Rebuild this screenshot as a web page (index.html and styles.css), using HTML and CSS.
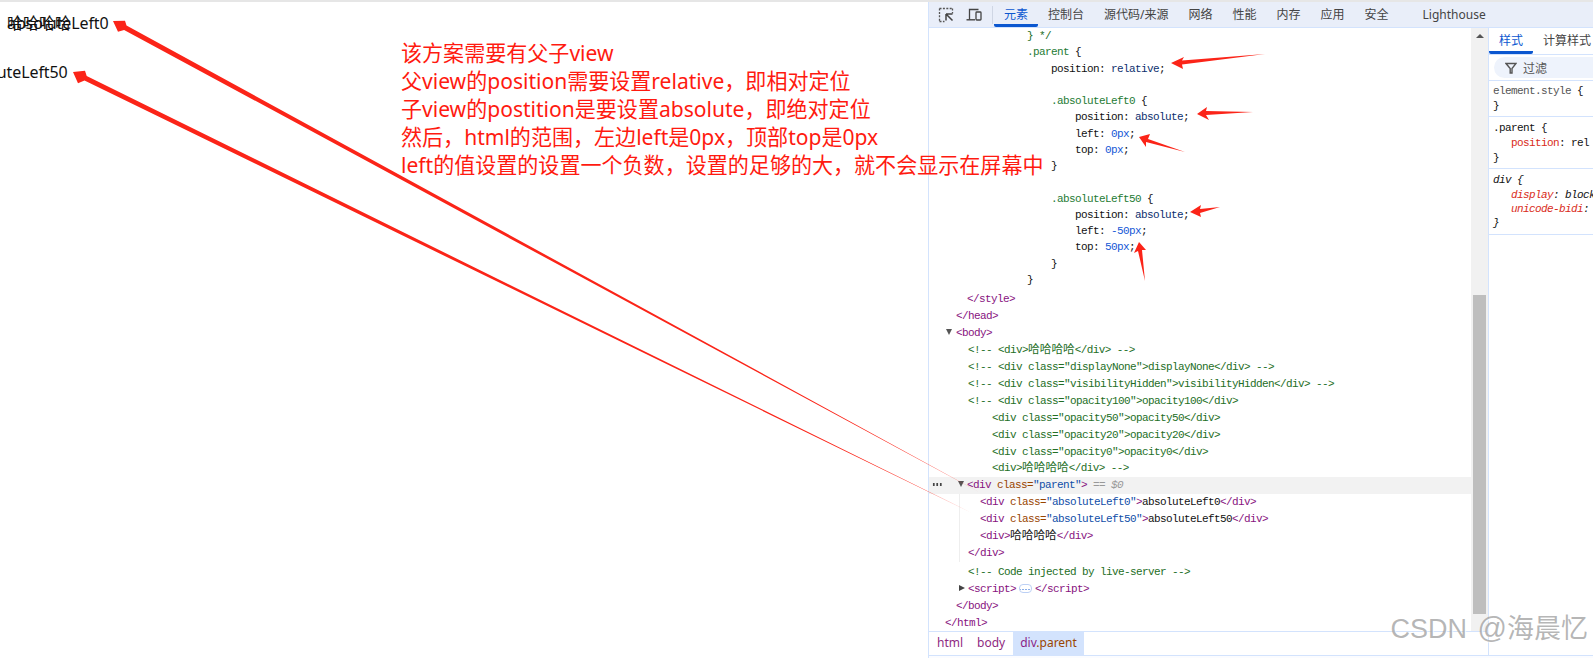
FILE: index.html
```html
<!DOCTYPE html>
<html lang="zh">
<head>
<meta charset="utf-8">
<title>absolute</title>
<link rel="stylesheet" href="styles.css">
</head>
<body>
<main class="preview">
  <div class="parent">
    <div class="abs abs-0">absoluteLeft0</div>
    <div class="abs abs-50">absoluteLeft50</div>
    <div class="plain">哈哈哈哈</div>
  </div>
</main>
<section class="devtools">
  <nav class="toolbar">
    <svg class="tool-icon" width="16" height="16" viewBox="0 0 16 16"><path d="M1.500 1.500h13M1.500 1.500v13M1.500 14.500h5M14.500 1.500v5" fill="none" stroke="#555" stroke-width="1.300" stroke-dasharray="2 1.400"/><path d="M8 7h6.500M8 7v6.500M8.500 7.500l6 6" fill="none" stroke="#444" stroke-width="1.500"/></svg>
    <svg class="tool-icon device" width="16" height="16" viewBox="0 0 16 16"><path d="M3.500 12.500V2.500h9" fill="none" stroke="#444" stroke-width="1.300"/><path d="M0.500 12.800h8.500" fill="none" stroke="#444" stroke-width="1.400"/><rect x="10" y="5" width="5" height="8" rx="0.800" fill="none" stroke="#444" stroke-width="1.300"/></svg>
    <span class="tool-sep"></span>
    <span class="tab active">元素</span>
    <span class="tab">控制台</span>
    <span class="tab">源代码/来源</span>
    <span class="tab">网络</span>
    <span class="tab">性能</span>
    <span class="tab">内存</span>
    <span class="tab">应用</span>
    <span class="tab">安全</span>
    <span class="tab lighthouse">Lighthouse</span>
  </nav>
  <div class="panes">
    <div class="elements">
      <div class="elements-main">
        <div class="tree">
          <div class="css-block">
            <div class="line p98 c">} */</div>
            <div class="line p98"><span class="sel">.parent</span> {</div>
            <div class="line p122">position: <span class="val">relative</span>;</div>
            <div class="line"></div>
            <div class="line p122"><span class="sel">.absoluteLeft0</span> {</div>
            <div class="line p146">position: <span class="val">absolute</span>;</div>
            <div class="line p146">left: <span class="num">0px</span>;</div>
            <div class="line p146">top: <span class="num">0px</span>;</div>
            <div class="line p122">}</div>
            <div class="line"></div>
            <div class="line p122"><span class="sel">.absoluteLeft50</span> {</div>
            <div class="line p146">position: <span class="val">absolute</span>;</div>
            <div class="line p146">left: <span class="num">-50px</span>;</div>
            <div class="line p146">top: <span class="num">50px</span>;</div>
            <div class="line p122">}</div>
            <div class="line p98">}</div>
          </div>
          <div class="row p38 t">&lt;/style&gt;</div>
          <div class="row p27 t">&lt;/head&gt;</div>
          <div class="row p17 t"><span class="tri-down"></span>&lt;body&gt;</div>
          <div class="row p39 c">&lt;!-- &lt;div&gt;<span class="cjk">哈哈哈哈</span>&lt;/div&gt; --&gt;</div>
          <div class="row p39 c">&lt;!-- &lt;div class="displayNone"&gt;displayNone&lt;/div&gt; --&gt;</div>
          <div class="row p39 c">&lt;!-- &lt;div class="visibilityHidden"&gt;visibilityHidden&lt;/div&gt; --&gt;</div>
          <div class="row p39 c">&lt;!-- &lt;div class="opacity100"&gt;opacity100&lt;/div&gt;</div>
          <div class="row p63 c">&lt;div class="opacity50"&gt;opacity50&lt;/div&gt;</div>
          <div class="row p63 c">&lt;div class="opacity20"&gt;opacity20&lt;/div&gt;</div>
          <div class="row p63 c">&lt;div class="opacity0"&gt;opacity0&lt;/div&gt;</div>
          <div class="row p63 c pull-up">&lt;div&gt;<span class="cjk">哈哈哈哈</span>&lt;/div&gt; --&gt;</div>
          <div class="row selected"><span class="dots"></span><span class="tri-down tight"></span><span class="t">&lt;div </span><span class="a">class=</span><span class="v">"parent"</span><span class="t">&gt;</span> <span class="eq">== <i>$0</i></span></div>
          <div class="children">
            <div class="row p20 t">&lt;div <span class="a">class=</span><span class="v">"absoluteLeft0"</span>&gt;<span class="txt">absoluteLeft0</span>&lt;/div&gt;</div>
            <div class="row p20 t">&lt;div <span class="a">class=</span><span class="v">"absoluteLeft50"</span>&gt;<span class="txt">absoluteLeft50</span>&lt;/div&gt;</div>
            <div class="row p20 t">&lt;div&gt;<span class="cjk txt">哈哈哈哈</span>&lt;/div&gt;</div>
            <div class="row p8 t">&lt;/div&gt;</div>
          </div>
          <div class="row p39 c push-down">&lt;!-- Code injected by live-server --&gt;</div>
          <div class="row p30 t"><span class="tri-right"></span>&lt;script&gt;<span class="pill"></span>&lt;/script&gt;</div>
          <div class="row p27 t">&lt;/body&gt;</div>
          <div class="row p16 t">&lt;/html&gt;</div>
        </div>
        <div class="scrollbar">
          <span class="arrow-up"></span>
          <span class="thumb"></span>
        </div>
      </div>
      <div class="crumbs">
        <span class="crumb">html</span>
        <span class="crumb">body</span>
        <span class="crumb current">div<span class="cls">.parent</span></span>
      </div>
    </div>
    <aside class="sidebar">
      <div class="side-tabs">
        <span class="side-tab active">样式</span>
        <span class="side-tab">计算样式</span>
      </div>
      <div class="filter-bar">
        <div class="filter">
          <svg width="12" height="12" viewBox="0 0 12 12"><path d="M1 1.500h10L7 6.500V11H5.200V6.500z" fill="none" stroke="#555" stroke-width="1.400"/></svg>
          <span>过滤</span>
        </div>
      </div>
      <div class="rule">
        <div class="rl muted">element.style <span class="ink">{</span></div>
        <div class="rl">}</div>
      </div>
      <div class="rule">
        <div class="rl">.parent {</div>
        <div class="rl in"><span class="prop">position</span>: rel</div>
        <div class="rl">}</div>
      </div>
      <div class="rule ua">
        <div class="rl">div {</div>
        <div class="rl in"><span class="prop">display</span>: block</div>
        <div class="rl in"><span class="prop">unicode-bidi</span>: i</div>
        <div class="rl">}</div>
      </div>
    </aside>
  </div>
  <div class="status"></div>
</section>

<div class="note">
  <div>该方案需要有父子view</div>
  <div>父view的position需要设置relative，即相对定位</div>
  <div>子view的postition是要设置absolute，即绝对定位</div>
  <div>然后，html的范围，左边left是0px，顶部top是0px</div>
  <div>left的值设置的设置一个负数，设置的足够的大，就不会显示在屏幕中</div>
</div>

<svg class="arrows" width="1593" height="658" viewBox="0 0 1593 658">
  <polygon points="113,21 125,20.700 126.500,25.500 979,492 124.100,29.900 118,31.700"/>
  <polygon points="73,72 85,70.700 86.700,76 972,513 84.500,80.400 78,83.300"/>
  <polygon points="1171,63 1184,57 1182,60.500 1265,54 1182,64.500 1183,69"/>
  <polygon points="1197,114 1207,107 1206,111 1253,112 1206,115 1209,120"/>
  <polygon points="1139,137 1150,134 1148,139 1185,152 1146,142 1146,147"/>
  <polygon points="1190,212 1201,205 1200,209 1220,207 1200,213 1201,217"/>
  <polygon points="1139,242 1134,253 1138,251 1145,281 1142,250 1146,250"/>
</svg>

<div class="watermark">CSDN <span class="at">@</span>海晨忆</div>
</body>
</html>
```

FILE: styles.css
```css
* { box-sizing: border-box; }
html, body { margin: 0; padding: 0; }
body {
  width: 1593px;
  height: 658px;
  overflow: hidden;
  display: flex;
  border-top: 2px solid #e6e6e6;
  background: #fff;
  position: relative;
  font-family: "Noto Sans", "Noto Sans CJK SC", sans-serif;
  color: #222;
}

/* rendered page */
.preview {
  width: 928px;
  flex: none;
  padding: 10px 7px;
  overflow: hidden;
  font-size: 16px;
  line-height: 22px;
  color: #111;
}
.parent { position: relative; }
.abs { position: absolute; top: 0; letter-spacing: -0.1px; white-space: nowrap; }
.abs-0 { left: 0; }
.abs-50 { left: -50px; top: 49px; }

/* devtools shell */
.devtools {
  flex: 1;
  min-width: 0;
  display: flex;
  flex-direction: column;
  border-left: 1px solid #d3e3fd;
}
.toolbar {
  height: 26px;
  flex: none;
  display: flex;
  align-items: center;
  padding-left: 9px;
  background: #e9eef9;
  border-bottom: 1px solid #d3e3fd;
  font-size: 12px;
  color: #444;
}
.tool-icon { flex: none; }
.device { margin-left: 12px; }
.tool-sep { width: 1px; height: 18px; background: #cfd6e4; margin: 0 1px 0 10px; }
.tab {
  height: 25px;
  line-height: 26px;
  padding: 0 10px;
  border-bottom: 3px solid transparent;
  white-space: nowrap;
}
.tab.active { color: #0b57d0; border-bottom-color: #0b57d0; border-radius: 2px; }
.lighthouse { margin-left: 14px; }

.panes { flex: 1; min-height: 0; display: flex; }
.elements { width: 559px; flex: none; display: flex; flex-direction: column; }
.elements-main { flex: 1; min-height: 0; display: flex; }
.tree {
  flex: 1;
  min-width: 0;
  overflow: hidden;
  font-family: "Liberation Mono", "Noto Sans CJK SC", monospace;
  font-size: 11px;
  letter-spacing: -0.6px;
  color: #222;
}
.css-block { margin-bottom: 2.400px; }
.line { height: 16.270px; line-height: 16px; color: #111; white-space: pre; }
.row { height: 17.100px; line-height: 17px; color: #222; white-space: pre; }
.pull-up { margin-top: -2px; }
.push-down { margin-top: 2px; }
.p8 { padding-left: 8px; }
.p16 { padding-left: 16px; }
.p17 { padding-left: 17px; }
.p20 { padding-left: 20px; }
.p27 { padding-left: 27px; }
.p30 { padding-left: 30px; }
.p38 { padding-left: 38px; }
.p39 { padding-left: 39px; }
.p63 { padding-left: 63px; }
.p98 { padding-left: 98px; }
.p122 { padding-left: 122px; }
.p146 { padding-left: 146px; }

.sel { color: #1e7b34; }
.val { color: #0d2f6e; }
.num { color: #1558d6; }
.line.c { color: #236e25; }
.row.c { color: #236e25; }
.t, .row.t { color: #881280; }
.a { color: #994500; }
.v { color: #0f4ea8; }
.txt { color: #111; }
.eq { color: #999; }
.cjk {
  font-family: "Noto Sans CJK SC", sans-serif;
  font-size: 11.700px;
  line-height: 1;
  letter-spacing: 0;
}
.tri-down, .tri-right { display: inline-block; vertical-align: 1px; }
.tri-down {
  border-left: 3.500px solid transparent;
  border-right: 3.500px solid transparent;
  border-top: 6px solid #555;
  margin-right: 4px;
}
.tri-down.tight { margin-right: 3px; }
.tri-right {
  border-top: 3.500px solid transparent;
  border-bottom: 3.500px solid transparent;
  border-left: 6px solid #444;
  margin-right: 3px;
}
.selected { background: #f2f2f2; padding-left: 3px; }
.dots {
  display: inline-block;
  width: 10px;
  height: 3px;
  margin-right: 16px;
  vertical-align: 2px;
  background: radial-gradient(circle at center, #444 1.100px, transparent 1.300px) 0 0 / 3.500px 3px repeat-x;
}
.children {
  margin-left: 30px;
  border-left: 1px solid #eeeeee;
}
.pill {
  display: inline-block;
  width: 13px;
  height: 9px;
  margin: 0 3px;
  vertical-align: -1px;
  border: 1px solid #bcd0f5;
  border-radius: 4px;
  background: radial-gradient(circle at center, #1a5fd0 0.800px, transparent 1px) 1.500px 2.500px / 3px 3px repeat-x;
}

.scrollbar {
  width: 17px;
  flex: none;
  display: flex;
  flex-direction: column;
  align-items: center;
  background: #f1f1f1;
}
.arrow-up {
  margin-top: 6px;
  border-left: 4px solid transparent;
  border-right: 4px solid transparent;
  border-bottom: 4px solid #555;
}
.thumb {
  width: 13px;
  height: 319px;
  margin-top: 257px;
  background: #bebebe;
}

.crumbs {
  height: 24px;
  flex: none;
  display: flex;
  border-top: 1px solid #d3e3fd;
  font-size: 12px;
  line-height: 22px;
  padding-left: 1px;
  color: #8f2a82;
}
.crumb { padding: 0 7px; margin-right: 1px; }
.crumb:first-child { margin-right: 0; }
.crumb.current { background: #d3e3fd; color: #8a1e86; }
.cls { color: #994500; }

.sidebar {
  flex: 1;
  min-width: 0;
  overflow: hidden;
  border-left: 1px solid #d3e3fd;
  font-family: "Liberation Mono", monospace;
  font-size: 11px;
  letter-spacing: -0.6px;
  color: #111;
}
.side-tabs {
  display: flex;
  height: 27px;
  font-family: "Noto Sans", "Noto Sans CJK SC", sans-serif;
  font-size: 12px;
  letter-spacing: 0;
  color: #444;
  border-bottom: 1px solid #d3e3fd;
}
.side-tab { padding: 0 10px; height: 26px; line-height: 26px; border-bottom: 3px solid transparent; white-space: nowrap; }
.side-tab.active { color: #0b57d0; border-bottom-color: #0b57d0; border-radius: 2px; }
.filter-bar { height: 26px; padding: 2px 0 0 5px; border-bottom: 1px solid #d3e3fd; }
.filter {
  height: 21px;
  width: 200px;
  padding-left: 11px;
  display: flex;
  align-items: center;
  gap: 6px;
  background: #eef3fc;
  border-radius: 11px;
  font-family: "Noto Sans", "Noto Sans CJK SC", sans-serif;
  font-size: 12px;
  letter-spacing: 0;
  color: #555;
}
.rule {
  padding: 3px 0 3px 4px;
  border-bottom: 1px solid #d3e3fd;
}
.rule + .rule { padding-top: 4px; }
.rl { height: 14.700px; line-height: 15px; white-space: pre; }
.in { padding-left: 18px; }
.muted { color: #555; }
.ink { color: #111; }
.prop { color: #d92b20; }
.ua { font-style: italic; }
.ua .rl { height: 14.300px; }
.status { height: 3px; flex: none; border-top: 1px solid #d3e3fd; background: #fbfcff; }

/* annotations on top of the screenshot */
.note {
  position: absolute;
  left: 401px;
  top: 37px;
  font-size: 21.050px;
  line-height: 27.900px;
  color: #ff1a10;
  white-space: nowrap;
}
.arrows { position: absolute; left: 0; top: -2px; pointer-events: none; }
.arrows polygon { fill: #fb2418; }
.watermark {
  position: absolute;
  right: 5px;
  top: 609px;
  font-family: "Liberation Sans", "Noto Sans CJK SC", sans-serif;
  font-size: 27px;
  line-height: 36px;
  word-spacing: 3px;
  color: rgba(150, 150, 150, 0.7);
  text-shadow: 1px 1px 1px rgba(255, 255, 255, 0.9);
  white-space: nowrap;
}
.at { font-size: 29px; line-height: 1; }
```
